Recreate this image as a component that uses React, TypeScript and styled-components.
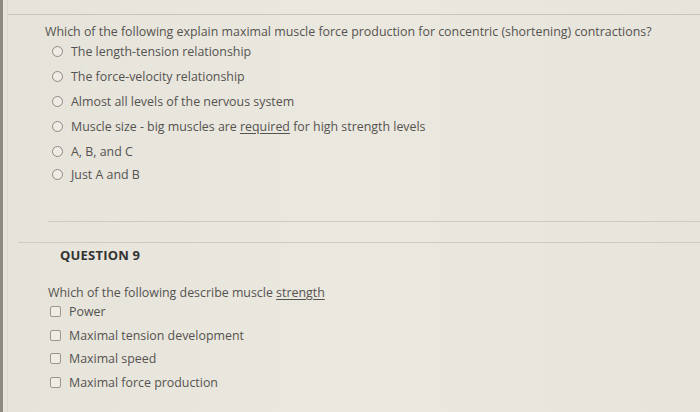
import React from "react";
import styled, { createGlobalStyle } from "styled-components";

const Global = createGlobalStyle`
  html, body { margin: 0; padding: 0; background: #e8e5dd; }
  body { font-family: "Open Sans", "DejaVu Sans", sans-serif; }
`;

const Page = styled.div`
  width: 700px;
  height: 412px;
  display: flex;
  background: linear-gradient(90deg, #e6e3db 0%, #ebe8e0 50%, #e7e4dc 100%);
  overflow: hidden;
`;

const EdgeStrip = styled.div`
  width: 3px;
  flex: none;
  background: #8f8a83;
`;

const Frame = styled.div`
  flex: 1;
  margin-left: 4px;
  border-left: 1px solid #dcd8d0;
  display: flex;
  flex-direction: column;
`;

const TopBar = styled.div`
  height: 14px;
  border-bottom: 1px solid #c8c4bc;
`;

const Question = styled.div`
  padding: 9px 0 0 37px;
  color: #55534f;
`;

const Prompt = styled.div`
  font-size: 12.4px;
  line-height: 16px;
  margin-bottom: -1px;
`;

const Options = styled.div<{ $indent: number }>`
  display: flex;
  flex-direction: column;
  padding-left: ${(p) => p.$indent}px;
`;

const Option = styled.div<{ $h: number }>`
  height: ${(p) => p.$h}px;
  display: flex;
  align-items: center;
  gap: 8px;
  font-size: 12.4px;
`;

const Radio = styled.span`
  width: 9px;
  height: 9px;
  border: 1.5px solid #8d8a85;
  border-radius: 50%;
  flex: none;
  background: #efece5;
`;

const Box = styled.span`
  width: 9px;
  height: 9px;
  border: 1.5px solid #9a968f;
  border-radius: 2px;
  flex: none;
  background: #efece5;
`;

const U = styled.span`
  text-decoration: underline;
  text-underline-offset: 2px;
`;

const Rule = styled.div<{ $left: number; $top: number }>`
  margin-left: ${(p) => p.$left}px;
  margin-top: ${(p) => p.$top}px;
  height: 1px;
  background: #cfcbc3;
`;

const QTitle = styled.div`
  padding: 3px 0 0 52px;
  font-size: 13px;
  font-weight: 700;
  color: #333331;
  letter-spacing: 0.2px;
`;

const Question2 = styled.div`
  padding: 21px 0 0 40px;
  color: #55534f;
`;

const radioOpts: { h: number; c: React.ReactNode }[] = [
  { h: 25, c: "The length-tension relationship" },
  { h: 25, c: "The force-velocity relationship" },
  { h: 25, c: "Almost all levels of the nervous system" },
  { h: 25, c: <>Muscle size - big muscles are <U>required</U> for high strength levels</> },
  { h: 24, c: "A, B, and C" },
  { h: 22, c: "Just A and B" },
];

const boxOpts: { h: number; c: string }[] = [
  { h: 23, c: "Power" },
  { h: 24, c: "Maximal tension development" },
  { h: 23, c: "Maximal speed" },
  { h: 24, c: "Maximal force production" },
];

export default function App() {
  return (
    <>
      <Global />
      <Page>
        <EdgeStrip />
        <Frame>
          <TopBar />
          <Question>
            <Prompt>
              Which of the following explain maximal muscle force production for concentric (shortening) contractions?
            </Prompt>
            <Options $indent={7}>
              {radioOpts.map((o, i) => (
                <Option key={i} $h={o.h}>
                  <Radio />
                  <span>{o.c}</span>
                </Option>
              ))}
            </Options>
          </Question>
          <Rule $left={40} $top={36} />
          <Rule $left={10} $top={20} />
          <QTitle>QUESTION 9</QTitle>
          <Question2>
            <Prompt>
              Which of the following describe muscle <U>strength</U>
            </Prompt>
            <Options $indent={2}>
              {boxOpts.map((o, i) => (
                <Option key={i} $h={o.h}>
                  <Box />
                  <span>{o.c}</span>
                </Option>
              ))}
            </Options>
          </Question2>
        </Frame>
      </Page>
    </>
  );
}
